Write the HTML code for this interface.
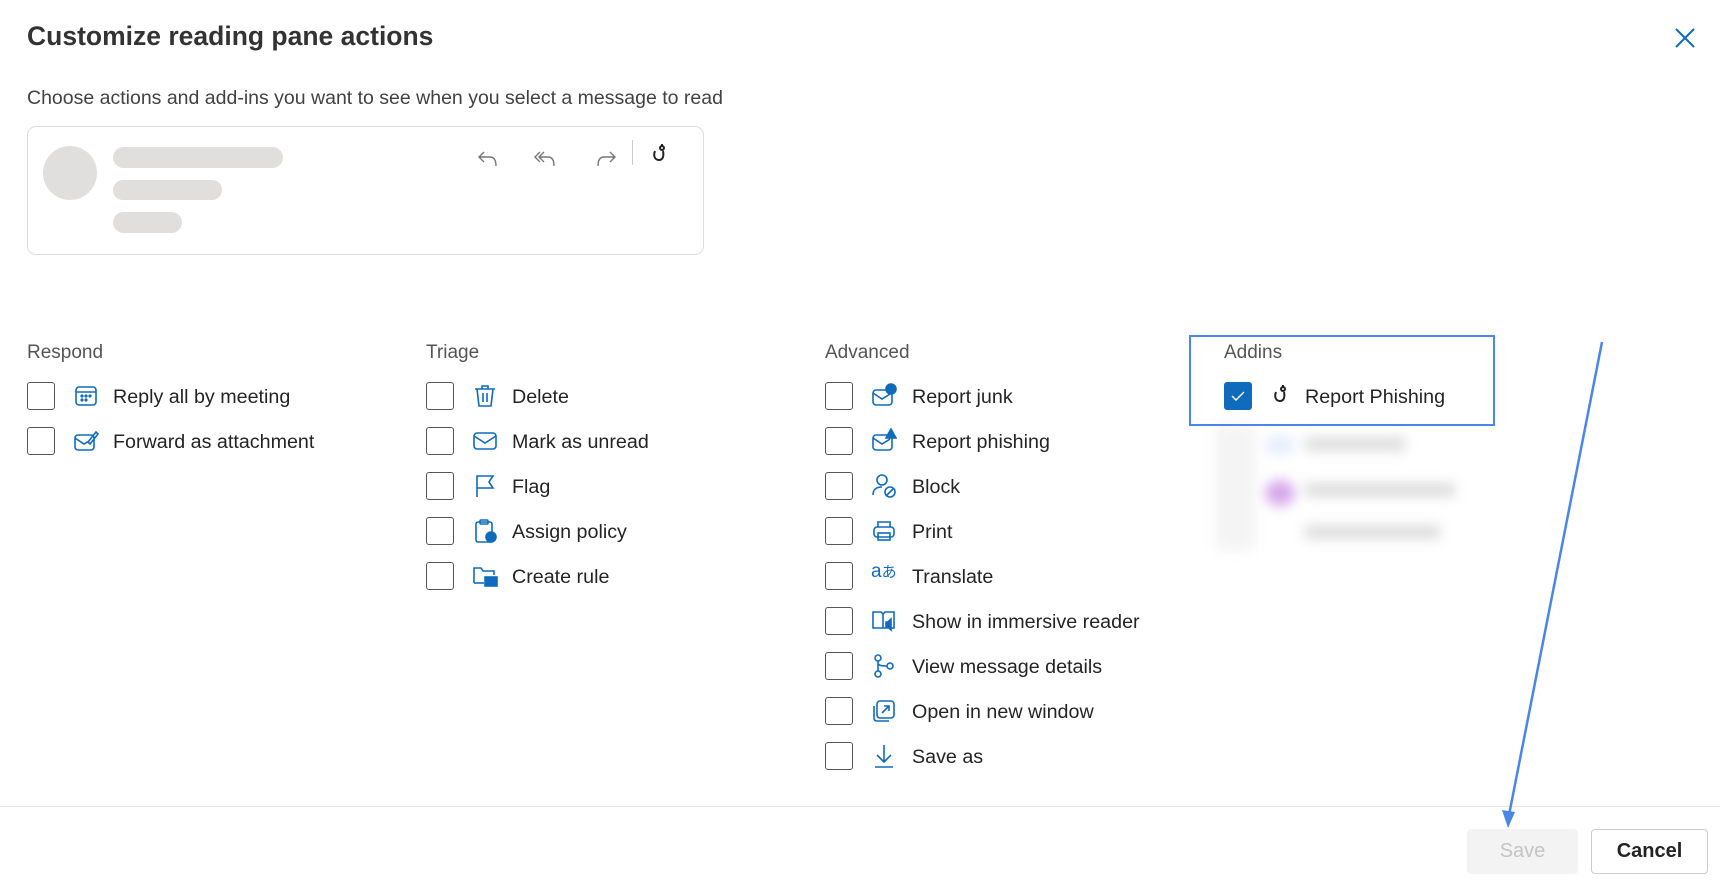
<!DOCTYPE html>
<html><head><meta charset="utf-8"><style>
*{margin:0;padding:0;box-sizing:border-box}
body{width:1720px;height:887px;background:#fff;font-family:"Liberation Sans",sans-serif;color:#242424;position:relative;overflow:hidden}
.a{position:absolute}
.t{font-size:19.7px;white-space:nowrap}
.h{font-size:19px;color:#555}
.cb{position:absolute;width:28px;height:28px;border:1.5px solid #555;border-radius:3px;background:#fff}
.ic{position:absolute;width:26px;height:26px}
.bar{position:absolute;background:#e0dfde;border-radius:11px}
</style></head><body>
<div class="a" style="left:27px;top:21px;font-size:26.5px;font-weight:bold;color:#333">Customize reading pane actions</div>
<svg class="a" style="left:1674px;top:27px" width="22" height="22" viewBox="0 0 22 22"><path d="M2 2L20 20M20 2L2 20" stroke="#0f6cbd" stroke-width="2"/></svg>
<div class="a" style="left:27px;top:87px;font-size:19.5px;color:#424242">Choose actions and add-ins you want to see when you select a message to read</div>
<div class="a" style="left:27px;top:126px;width:677px;height:129px;border:1.5px solid #ddd;border-radius:9px"></div>
<div class="a" style="left:43px;top:146px;width:54px;height:54px;border-radius:50%;background:#e0dfde"></div>
<div class="bar" style="left:113px;top:147px;width:170px;height:21px"></div>
<div class="bar" style="left:113px;top:180px;width:109px;height:20px"></div>
<div class="bar" style="left:113px;top:212px;width:69px;height:21px"></div>
<svg class="a" style="left:478px;top:148px" width="140" height="22" viewBox="0 0 140 22" fill="none" stroke="#777" stroke-width="1.4"><path d="M6 4L1 9L6 14M1 9H12C16 9 18 12 18 18"/><path d="M62 4L57 9L62 14M66 4L61 9L66 14M61 9H70C74 9 76 12 76 18"/><path d="M132 4L137 9L132 14M137 9H126C122 9 120 12 120 18"/></svg>
<div class="a" style="left:632px;top:140px;width:1px;height:25px;background:#ccc"></div>
<svg class="a" style="left:651px;top:142px" width="18" height="22" viewBox="0 0 18 22" fill="none" stroke="#222" stroke-width="2"><path d="M4 9C2 14 4 18 8 18C12 18 13 14 12 9"/><circle cx="11" cy="6" r="2"/><path d="M11 2V4"/></svg>

<div class="a h" style="left:27px;top:342px">Respond</div>
<div class="a h" style="left:426px;top:342px">Triage</div>
<div class="a h" style="left:825px;top:342px">Advanced</div>
<div class="a h" style="left:1224px;top:342px">Addins</div>

<div class="cb" style="left:27px;top:382px"></div>
<svg class="ic" style="left:73px;top:383px" viewBox="0 0 26 26" fill="none" stroke="#0f6cbd" stroke-width="1.6"><rect x="3" y="4" width="20" height="18" rx="3"/><path d="M3 9H23"/><circle cx="9" cy="13" r=".8"/><circle cx="13" cy="13" r=".8"/><circle cx="17" cy="13" r=".8"/><circle cx="9" cy="17" r=".8"/><circle cx="13" cy="17" r=".8"/></svg>
<div class="a t" style="left:113px;top:386px">Reply all by meeting</div>
<div class="cb" style="left:27px;top:427px"></div>
<svg class="ic" style="left:73px;top:428px" viewBox="0 0 26 26" fill="none" stroke="#0f6cbd" stroke-width="1.6"><rect x="2" y="7" width="19" height="15" rx="3"/><path d="M2 10L11 16L16 13"/><path d="M15 14L23 4L25 6L17 16Z"/></svg>
<div class="a t" style="left:113px;top:431px">Forward as attachment</div>

<div class="cb" style="left:426px;top:382px"></div>
<svg class="ic" style="left:472px;top:383px" viewBox="0 0 26 26" fill="none" stroke="#0f6cbd" stroke-width="1.6"><path d="M3 6H23M10 6V3H16V6M5 6L7 23H19L21 6M11 10V19M15 10V19"/></svg>
<div class="a t" style="left:512px;top:386px">Delete</div>
<div class="cb" style="left:426px;top:427px"></div>
<svg class="ic" style="left:472px;top:428px" viewBox="0 0 26 26" fill="none" stroke="#0f6cbd" stroke-width="1.6"><rect x="2" y="5" width="22" height="16" rx="3"/><path d="M2 8L13 15L24 8"/></svg>
<div class="a t" style="left:512px;top:431px">Mark as unread</div>
<div class="cb" style="left:426px;top:472px"></div>
<svg class="ic" style="left:472px;top:473px" viewBox="0 0 26 26" fill="none" stroke="#0f6cbd" stroke-width="1.6"><path d="M5 24V3H21L17 9L21 15H5"/></svg>
<div class="a t" style="left:512px;top:476px">Flag</div>
<div class="cb" style="left:426px;top:517px"></div>
<svg class="ic" style="left:472px;top:518px" viewBox="0 0 26 26" fill="none" stroke="#0f6cbd" stroke-width="1.6"><rect x="4" y="4" width="16" height="20" rx="2"/><rect x="8" y="2" width="8" height="4" rx="1"/><circle cx="19" cy="19" r="5" fill="#0f6cbd"/></svg>
<div class="a t" style="left:512px;top:521px">Assign policy</div>
<div class="cb" style="left:426px;top:562px"></div>
<svg class="ic" style="left:472px;top:563px" viewBox="0 0 26 26" fill="none" stroke="#0f6cbd" stroke-width="1.6"><path d="M2 20V5H9L11 8H22V12"/><path d="M2 20H12"/><rect x="13" y="14" width="12" height="9" fill="#0f6cbd"/></svg>
<div class="a t" style="left:512px;top:566px">Create rule</div>

<div class="cb" style="left:825px;top:382px"></div>
<svg class="ic" style="left:871px;top:383px" viewBox="0 0 26 26" fill="none" stroke="#0f6cbd" stroke-width="1.6"><rect x="2" y="7" width="19" height="15" rx="3"/><path d="M2 10L11 16L19 11"/><circle cx="20" cy="6" r="5" fill="#0f6cbd"/></svg>
<div class="a t" style="left:912px;top:386px">Report junk</div>
<div class="cb" style="left:825px;top:427px"></div>
<svg class="ic" style="left:871px;top:428px" viewBox="0 0 26 26" fill="none" stroke="#0f6cbd" stroke-width="1.6"><rect x="2" y="7" width="19" height="15" rx="3"/><path d="M2 10L11 16L19 11"/><path d="M20 1L25 10H15Z" fill="#0f6cbd"/></svg>
<div class="a t" style="left:912px;top:431px">Report phishing</div>
<div class="cb" style="left:825px;top:472px"></div>
<svg class="ic" style="left:871px;top:473px" viewBox="0 0 26 26" fill="none" stroke="#0f6cbd" stroke-width="1.6"><circle cx="11" cy="7" r="5"/><path d="M2 22C2 16 6 14 11 14"/><circle cx="19" cy="19" r="5"/><path d="M16 22L22 16"/></svg>
<div class="a t" style="left:912px;top:476px">Block</div>
<div class="cb" style="left:825px;top:517px"></div>
<svg class="ic" style="left:871px;top:518px" viewBox="0 0 26 26" fill="none" stroke="#0f6cbd" stroke-width="1.6"><path d="M7 9V4H19V9"/><rect x="3" y="9" width="20" height="10" rx="3"/><rect x="7" y="15" width="12" height="7"/></svg>
<div class="a t" style="left:912px;top:521px">Print</div>
<div class="cb" style="left:825px;top:562px"></div>
<div class="a" style="left:871px;top:561px;font-size:19px;color:#0f6cbd;font-family:'Liberation Sans','Noto Sans CJK JP',sans-serif">a<span style="font-size:15px">あ</span></div>
<div class="a t" style="left:912px;top:566px">Translate</div>
<div class="cb" style="left:825px;top:607px"></div>
<svg class="ic" style="left:871px;top:608px" viewBox="0 0 26 26" fill="none" stroke="#0f6cbd" stroke-width="1.6"><path d="M2 4H10L12 6L14 4H23V20H2Z"/><path d="M12 6V20"/><path d="M15 14H17L20 11V22L17 19H15Z" fill="#0f6cbd"/></svg>
<div class="a t" style="left:912px;top:611px">Show in immersive reader</div>
<div class="cb" style="left:825px;top:652px"></div>
<svg class="ic" style="left:871px;top:653px" viewBox="0 0 26 26" fill="none" stroke="#0f6cbd" stroke-width="1.6"><circle cx="7" cy="5" r="3"/><circle cx="7" cy="21" r="3"/><circle cx="19" cy="13" r="3"/><path d="M7 8V18M7 10C7 13 12 13 16 13"/></svg>
<div class="a t" style="left:912px;top:656px">View message details</div>
<div class="cb" style="left:825px;top:697px"></div>
<svg class="ic" style="left:871px;top:698px" viewBox="0 0 26 26" fill="none" stroke="#0f6cbd" stroke-width="1.6"><rect x="6" y="3" width="17" height="17" rx="3"/><path d="M3 8V20C3 22 4 23 6 23H18"/><path d="M11 15L18 8M13 8H18V13"/></svg>
<div class="a t" style="left:912px;top:701px">Open in new window</div>
<div class="cb" style="left:825px;top:742px"></div>
<svg class="ic" style="left:871px;top:743px" viewBox="0 0 26 26" fill="none" stroke="#0f6cbd" stroke-width="1.6"><path d="M13 2V19M6 12L13 19L20 12M4 24H22"/></svg>
<div class="a t" style="left:912px;top:746px">Save as</div>

<div class="a" style="left:1224px;top:382px;width:28px;height:28px;border-radius:3px;background:#0f6cbd"></div>
<svg class="a" style="left:1230px;top:388px" width="16" height="16" viewBox="0 0 16 16" fill="none" stroke="#fff" stroke-width="1.4"><path d="M2 8L6 12L14 4"/></svg>
<svg class="a" style="left:1272px;top:383px" width="18" height="22" viewBox="0 0 18 22" fill="none" stroke="#222" stroke-width="2"><path d="M4 9C2 14 4 18 8 18C12 18 13 14 12 9"/><circle cx="11" cy="6" r="2"/><path d="M11 2V4"/></svg>
<div class="a t" style="left:1305px;top:386px">Report Phishing</div>
<div class="a" style="left:1215px;top:425px;width:250px;height:130px;filter:blur(6px)">
<div class="a" style="left:50px;top:10px;width:30px;height:20px;background:#e6eefc;border-radius:10px"></div>
<div class="a" style="left:90px;top:12px;width:100px;height:14px;background:#ddd"></div>
<div class="a" style="left:50px;top:55px;width:30px;height:26px;background:#d6a8ea;border-radius:50%"></div>
<div class="a" style="left:90px;top:58px;width:150px;height:14px;background:#ddd"></div>
<div class="a" style="left:90px;top:100px;width:135px;height:14px;background:#ddd"></div>
<div class="a" style="left:0px;top:0px;width:40px;height:125px;background:#f4f4f4"></div>
</div>
<div class="a" style="left:1189px;top:335px;width:306px;height:91px;border:2.5px solid #4a86e8"></div>

<div class="a" style="left:0;top:806px;width:1720px;height:1px;background:#e6e6e6"></div>
<div class="a" style="left:1467px;top:829px;width:111px;height:45px;background:#f3f3f3;border-radius:4px;color:#c4c4c4;font-size:20px;text-align:center;line-height:45px">Save</div>
<div class="a" style="left:1591px;top:829px;width:117px;height:45px;border:1.5px solid #ccc;border-radius:4px;font-size:20px;font-weight:bold;text-align:center;line-height:42px">Cancel</div>
<svg class="a" style="left:0;top:0" width="1720" height="887"><path d="M1602 342L1509 815" stroke="#4a86e8" stroke-width="2.5"/><path d="M1502 810L1508 828L1515 812Z" fill="#4a86e8"/></svg>
</body></html>
